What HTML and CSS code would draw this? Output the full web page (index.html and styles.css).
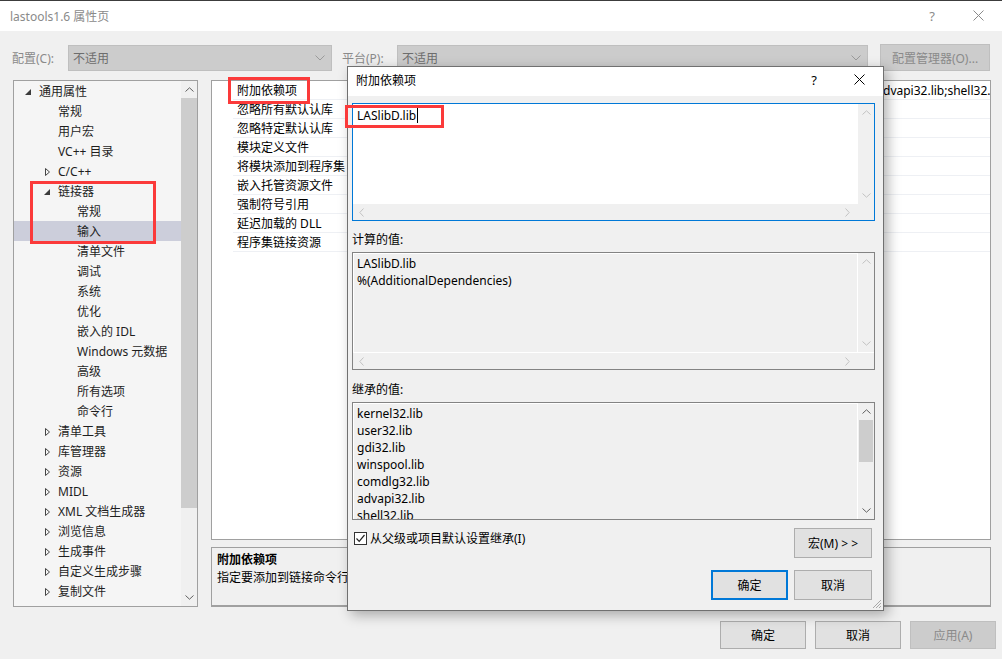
FILE: index.html
```html
<!DOCTYPE html>
<html lang="zh-CN">
<head>
    <meta charset="UTF-8">
    <title>lastools1.6 属性页</title>
    <link rel="stylesheet" href="styles.css">
</head>
<body>
    <div class="titlebar">
        <span class="title">lastools1.6 属性页</span>
        <span class="tb-help">?</span>
        <svg class="tb-close" width="11" height="11" viewBox="0 0 11 11"><path d="M0.5 0.5L10.5 10.5M10.5 0.5L0.5 10.5" stroke="#8a8a8a" stroke-width="1"/></svg>
    </div>

    <div class="config">
        <label class="cfg-label">配置(C):</label>
        <div class="combo combo-config">不适用<svg width="10" height="6" viewBox="0 0 10 6"><path d="M0.5 0.5L5 5L9.5 0.5" fill="none" stroke="#9a9a9a"/></svg></div>
        <label class="cfg-label cfg-platform">平台(P):</label>
        <div class="combo combo-platform">不适用<svg width="10" height="6" viewBox="0 0 10 6"><path d="M0.5 0.5L5 5L9.5 0.5" fill="none" stroke="#9a9a9a"/></svg></div>
        <button class="btn btn-cfg" disabled>配置管理器(O)...</button>
    </div>

    <div class="main">
        <div class="tree">
            <div class="tree-list">
                <div class="node l0"><span class="tw"><svg width="6" height="6" viewBox="0 0 6 6"><path d="M6 0V6H0Z" fill="#3c3c3c"/></svg></span>通用属性</div>
                <div class="node l1"><span class="tw"></span>常规</div>
                <div class="node l1"><span class="tw"></span>用户宏</div>
                <div class="node l1"><span class="tw"></span>VC++ 目录</div>
                <div class="node l1"><span class="tw"><svg class="closed" width="5" height="8" viewBox="0 0 5 8"><path d="M0.5 0.5L4.5 4L0.5 7.5Z" fill="none" stroke="#444"/></svg></span>C/C++</div>
                <div class="node l1"><span class="tw"><svg width="6" height="6" viewBox="0 0 6 6"><path d="M6 0V6H0Z" fill="#3c3c3c"/></svg></span>链接器</div>
                <div class="node l2">常规</div>
                <div class="node l2 selected">输入</div>
                <div class="node l2">清单文件</div>
                <div class="node l2">调试</div>
                <div class="node l2">系统</div>
                <div class="node l2">优化</div>
                <div class="node l2">嵌入的 IDL</div>
                <div class="node l2">Windows 元数据</div>
                <div class="node l2">高级</div>
                <div class="node l2">所有选项</div>
                <div class="node l2">命令行</div>
                <div class="node l1"><span class="tw"><svg class="closed" width="5" height="8" viewBox="0 0 5 8"><path d="M0.5 0.5L4.5 4L0.5 7.5Z" fill="none" stroke="#444"/></svg></span>清单工具</div>
                <div class="node l1"><span class="tw"><svg class="closed" width="5" height="8" viewBox="0 0 5 8"><path d="M0.5 0.5L4.5 4L0.5 7.5Z" fill="none" stroke="#444"/></svg></span>库管理器</div>
                <div class="node l1"><span class="tw"><svg class="closed" width="5" height="8" viewBox="0 0 5 8"><path d="M0.5 0.5L4.5 4L0.5 7.5Z" fill="none" stroke="#444"/></svg></span>资源</div>
                <div class="node l1"><span class="tw"><svg class="closed" width="5" height="8" viewBox="0 0 5 8"><path d="M0.5 0.5L4.5 4L0.5 7.5Z" fill="none" stroke="#444"/></svg></span>MIDL</div>
                <div class="node l1"><span class="tw"><svg class="closed" width="5" height="8" viewBox="0 0 5 8"><path d="M0.5 0.5L4.5 4L0.5 7.5Z" fill="none" stroke="#444"/></svg></span>XML 文档生成器</div>
                <div class="node l1"><span class="tw"><svg class="closed" width="5" height="8" viewBox="0 0 5 8"><path d="M0.5 0.5L4.5 4L0.5 7.5Z" fill="none" stroke="#444"/></svg></span>浏览信息</div>
                <div class="node l1"><span class="tw"><svg class="closed" width="5" height="8" viewBox="0 0 5 8"><path d="M0.5 0.5L4.5 4L0.5 7.5Z" fill="none" stroke="#444"/></svg></span>生成事件</div>
                <div class="node l1"><span class="tw"><svg class="closed" width="5" height="8" viewBox="0 0 5 8"><path d="M0.5 0.5L4.5 4L0.5 7.5Z" fill="none" stroke="#444"/></svg></span>自定义生成步骤</div>
                <div class="node l1"><span class="tw"><svg class="closed" width="5" height="8" viewBox="0 0 5 8"><path d="M0.5 0.5L4.5 4L0.5 7.5Z" fill="none" stroke="#444"/></svg></span>复制文件</div>
            </div>
            <div class="vbar tree-bar">
                <span class="arrow"><svg width="9" height="5" viewBox="0 0 9 5"><path d="M0.5 4.5L4.5 0.8L8.5 4.5" fill="none" stroke="#606060"/></svg></span>
                <span class="thumb tree-thumb"></span>
                <span class="track"></span>
                <span class="arrow"><svg width="9" height="5" viewBox="0 0 9 5"><path d="M0.5 0.5L4.5 4.2L8.5 0.5" fill="none" stroke="#606060"/></svg></span>
            </div>
        </div>

        <div class="right">
            <div class="grid">
                <div class="grid-row"><span class="gutter"></span><span class="name">附加依赖项</span><span class="value">LASlibD.lib;kernel32.lib;user32.lib;gdi32.lib;winspool.lib;comdlg32.lib;advapi32.lib;shell32.lib;ole32.lib;oleaut32.lib;uuid.lib;odbc32.lib;odbccp32.lib;%(AdditionalDependencies)</span></div>
                <div class="grid-row"><span class="gutter"></span><span class="name">忽略所有默认认库</span><span class="value"></span></div>
                <div class="grid-row"><span class="gutter"></span><span class="name">忽略特定默认认库</span><span class="value"></span></div>
                <div class="grid-row"><span class="gutter"></span><span class="name">模块定义文件</span><span class="value"></span></div>
                <div class="grid-row"><span class="gutter"></span><span class="name">将模块添加到程序集</span><span class="value"></span></div>
                <div class="grid-row"><span class="gutter"></span><span class="name">嵌入托管资源文件</span><span class="value"></span></div>
                <div class="grid-row"><span class="gutter"></span><span class="name">强制符号引用</span><span class="value"></span></div>
                <div class="grid-row"><span class="gutter"></span><span class="name">延迟加载的 DLL</span><span class="value"></span></div>
                <div class="grid-row"><span class="gutter"></span><span class="name">程序集链接资源</span><span class="value"></span></div>
            </div>
            <div class="desc">
                <div class="desc-title">附加依赖项</div>
                <div class="desc-text">指定要添加到链接命令行的附加项。[例如 kernel32.lib]</div>
            </div>
        </div>
    </div>

    <div class="footer">
        <button class="btn">确定</button>
        <button class="btn">取消</button>
        <button class="btn" disabled>应用(A)</button>
    </div>

    <div class="dialog">
        <div class="dlg-title">
            <span class="dlg-name">附加依赖项</span>
            <span class="dlg-help">?</span>
            <svg class="dlg-close" width="11" height="11" viewBox="0 0 11 11"><path d="M0.5 0.5L10.5 10.5M10.5 0.5L0.5 10.5" stroke="#000" stroke-width="1"/></svg>
        </div>
        <div class="dlg-body">
            <div class="box edit">
                <div class="box-main">
                    <div class="box-text">LASlibD.lib<span class="caret"></span></div>
                    <div class="vbar">
                        <span class="arrow"><svg width="9" height="5" viewBox="0 0 9 5"><path d="M0.5 4.5L4.5 0.8L8.5 4.5" fill="none" stroke="#c2c2c2"/></svg></span>
                        <span class="track"></span>
                        <span class="arrow"><svg width="9" height="5" viewBox="0 0 9 5"><path d="M0.5 0.5L4.5 4.2L8.5 0.5" fill="none" stroke="#c2c2c2"/></svg></span>
                    </div>
                </div>
                <div class="hbar">
                    <span class="harrow"><svg width="5" height="9" viewBox="0 0 5 9"><path d="M4.5 0.5L0.8 4.5L4.5 8.5" fill="none" stroke="#c2c2c2"/></svg></span>
                    <span class="harrow"><svg width="5" height="9" viewBox="0 0 5 9"><path d="M0.5 0.5L4.2 4.5L0.5 8.5" fill="none" stroke="#c2c2c2"/></svg></span>
                </div>
            </div>

            <div class="dlg-label">计算的值:</div>
            <div class="box readonly">
                <div class="box-main">
                    <div class="box-text">
                        <div>LASlibD.lib</div>
                        <div>%(AdditionalDependencies)</div>
                    </div>
                    <div class="vbar">
                        <span class="arrow"><svg width="9" height="5" viewBox="0 0 9 5"><path d="M0.5 4.5L4.5 0.8L8.5 4.5" fill="none" stroke="#c2c2c2"/></svg></span>
                        <span class="track"></span>
                        <span class="arrow"><svg width="9" height="5" viewBox="0 0 9 5"><path d="M0.5 0.5L4.5 4.2L8.5 0.5" fill="none" stroke="#c2c2c2"/></svg></span>
                    </div>
                </div>
                <div class="hbar">
                    <span class="harrow"><svg width="5" height="9" viewBox="0 0 5 9"><path d="M4.5 0.5L0.8 4.5L4.5 8.5" fill="none" stroke="#c2c2c2"/></svg></span>
                    <span class="harrow"><svg width="5" height="9" viewBox="0 0 5 9"><path d="M0.5 0.5L4.2 4.5L0.5 8.5" fill="none" stroke="#c2c2c2"/></svg></span>
                </div>
            </div>

            <div class="dlg-label second">继承的值:</div>
            <div class="box readonly">
                <div class="box-main full">
                    <div class="box-text">
                        <div>kernel32.lib</div>
                        <div>user32.lib</div>
                        <div>gdi32.lib</div>
                        <div>winspool.lib</div>
                        <div>comdlg32.lib</div>
                        <div>advapi32.lib</div>
                        <div>shell32.lib</div>
                    </div>
                    <div class="vbar">
                        <span class="arrow"><svg width="9" height="5" viewBox="0 0 9 5"><path d="M0.5 4.5L4.5 0.8L8.5 4.5" fill="none" stroke="#606060"/></svg></span>
                        <span class="thumb list-thumb"></span>
                        <span class="track"></span>
                        <span class="arrow"><svg width="9" height="5" viewBox="0 0 9 5"><path d="M0.5 0.5L4.5 4.2L8.5 0.5" fill="none" stroke="#606060"/></svg></span>
                    </div>
                </div>
            </div>

            <div class="dlg-row">
                <label class="check"><span class="checkbox"><svg width="11" height="11" viewBox="0 0 11 11"><path d="M1.5 5.5L4.2 8.3L9.5 2" fill="none" stroke="#222" stroke-width="1.2"/></svg></span><span class="check-text">从父级或项目默认设置继承(I)</span></label>
                <button class="btn dlg-btn">宏(M) &gt; &gt;</button>
            </div>
            <div class="dlg-actions">
                <button class="btn dlg-btn default">确定</button>
                <button class="btn dlg-btn">取消</button>
            </div>
        </div>
        <svg class="grip" width="10" height="10" viewBox="0 0 10 10"><path d="M9 1L1 9M9 4L4 9M9 7L7 9" stroke="#a8a8a8" stroke-width="1"/></svg>
    </div>

    <div class="mark mark-tree"></div>
    <div class="mark mark-prop"></div>
    <div class="mark mark-edit"></div>
</body>
</html>
```

FILE: styles.css
```css
body {
    margin: 0;
    width: 1002px;
    height: 659px;
    overflow: hidden;
    position: relative;
    background-color: #f0f0f0;
    font-family: "Noto Sans", "Noto Sans CJK SC", sans-serif;
    font-size: 12px;
    color: #000;
}
button {
    font-family: inherit;
    font-size: 12px;
}

/* outer window */
.titlebar {
    height: 31px;
    box-sizing: border-box;
    background-color: #fff;
    border-top: 1px solid #3c3c3c;
    display: flex;
    align-items: center;
    padding-left: 10px;
    padding-bottom: 1px;
    color: #8a8a8a;
}
.title {
    flex: 1;
}
.tb-help {
    margin-right: 38px;
    font-size: 13px;
}
.tb-close {
    margin-right: 18px;
}
.config {
    display: flex;
    align-items: center;
    height: 27px;
    margin-top: 13px;
    padding-left: 12px;
}
.cfg-label {
    width: 56px;
    color: #8a8a8a;
}
.cfg-platform {
    margin-left: 10px;
    width: 55px;
}
.combo {
    height: 26px;
    box-sizing: border-box;
    border: 1px solid #bfbfbf;
    background-color: #cccccc;
    color: #6d6d6d;
    display: flex;
    align-items: center;
    justify-content: space-between;
    padding: 0 6px 0 4px;
}
.combo-config {
    width: 264px;
}
.combo-platform {
    width: 471px;
}
.btn {
    height: 28px;
    box-sizing: border-box;
    border: 1px solid #adadad;
    background-color: #e1e1e1;
    color: #000;
    padding: 0;
}
.btn:disabled {
    background-color: #cccccc;
    border-color: #bfbfbf;
    color: #8a8a8a;
}
.btn-cfg {
    margin-left: 12px;
    width: 110px;
    height: 27px;
}

.main {
    display: flex;
    gap: 13px;
    height: 527px;
    margin-top: 9px;
    padding-left: 13px;
}
.tree {
    width: 185px;
    box-sizing: border-box;
    border: 1px solid #a0a0a0;
    background-color: #f5f5f5;
    display: flex;
}
.tree-list {
    width: 167px;
    flex: none;
    overflow: hidden;
}
.node {
    height: 20px;
    box-sizing: border-box;
    padding-top: 1px;
    line-height: 19px;
    display: flex;
    align-items: center;
    white-space: nowrap;
    color: #1e1e1e;
}
.l0 {
    padding-left: 11px;
}
.l1 {
    padding-left: 30px;
}
.l2 {
    padding-left: 63px;
}
.tw {
    width: 14px;
    flex: none;
    display: flex;
    align-items: center;
}
.tw .closed {
    margin-left: 1px;
}
.selected {
    background-color: #cccedb;
}

/* scrollbars */
.vbar {
    width: 16px;
    flex: none;
    display: flex;
    flex-direction: column;
    background-color: #f0f0f0;
}
.arrow {
    height: 17px;
    flex: none;
    display: flex;
    align-items: center;
    justify-content: center;
}
.track {
    flex: 1;
}
.thumb {
    flex: none;
    margin: 0 1px;
    background-color: #cdcdcd;
}
.tree-thumb {
    height: 410px;
    margin: 0;
}
.list-thumb {
    height: 42px;
}
.hbar {
    height: 16px;
    display: flex;
    align-items: center;
    justify-content: space-between;
    padding: 0 24px 0 6px;
    background-color: #f0f0f0;
}

/* property grid */
.right {
    width: 780px;
    display: flex;
    flex-direction: column;
    gap: 7px;
}
.grid {
    height: 461px;
    box-sizing: border-box;
    border: 1px solid #a0a0a0;
    background-color: #fff;
    overflow: hidden;
}
.grid-row {
    display: flex;
    height: 19px;
}
.gutter {
    width: 21px;
    flex: none;
}
.name, .value {
    box-sizing: border-box;
    height: 19px;
    padding-top: 1px;
    line-height: 17px;
    border-bottom: 1px solid #eef0f4;
    padding-left: 4px;
    white-space: nowrap;
    overflow: hidden;
}
.name {
    width: 251px;
    flex: none;
}
.value {
    flex: 1;
    min-width: 0;
}
.desc {
    height: 60px;
    box-sizing: border-box;
    border: 1px solid #a0a0a0;
    border-bottom-width: 2px;
    padding: 3px 5px 0;
    line-height: 18px;
    overflow: hidden;
    white-space: nowrap;
}
.desc-title {
    font-weight: bold;
}

.footer {
    display: flex;
    justify-content: flex-end;
    gap: 9px;
    margin-top: 14px;
    padding-right: 6px;
}
.footer .btn {
    width: 86px;
}

/* dialog */
.dialog {
    position: absolute;
    left: 347px;
    top: 66px;
    width: 537px;
    height: 545px;
    box-sizing: border-box;
    border: 1px solid #707070;
    background-color: #f0f0f0;
    box-shadow: 4px 4px 12px rgba(0, 0, 0, 0.3);
}
.dlg-title {
    height: 29px;
    box-sizing: border-box;
    padding: 0 0 4px 8px;
    background-color: #fff;
    display: flex;
    align-items: center;
}
.dlg-name {
    flex: 1;
}
.dlg-help {
    font-size: 13px;
    margin-right: 37px;
}
.dlg-close {
    margin-right: 18px;
}
.dlg-body {
    padding: 7px 8px 10px 4px;
}
.box {
    height: 118px;
    box-sizing: border-box;
    border: 1px solid #838383;
    display: flex;
    flex-direction: column;
}
.box-main {
    flex: 1;
    display: flex;
    min-height: 0;
}
.box-text {
    flex: 1;
    padding: 2px 0 0 4px;
    line-height: 17px;
    overflow: hidden;
    white-space: nowrap;
}
.edit {
    border-color: #0078d7;
    background-color: #fff;
}
.edit .box-text {
    padding-top: 3px;
}
.caret {
    display: inline-block;
    width: 1px;
    height: 15px;
    background-color: #000;
    vertical-align: -3px;
    margin-left: 1px;
}
.readonly {
    background-color: #f0f0f0;
    box-shadow: inset 1px 1px 0 #fff;
}
.readonly .vbar {
    border-left: 1px solid #fff;
}
.readonly .hbar {
    border-top: 1px solid #fff;
}
.dlg-label {
    line-height: 17px;
    margin: 10px 0 4px;
}
.dlg-label.second {
    margin-top: 11px;
}
.dlg-row {
    display: flex;
    align-items: flex-start;
    justify-content: space-between;
    margin-top: 8px;
    padding-right: 3px;
}
.check {
    display: flex;
    align-items: center;
    gap: 3px;
    margin: 2px 0 0 2px;
    line-height: 17px;
}
.checkbox {
    width: 13px;
    height: 13px;
    flex: none;
    box-sizing: border-box;
    border: 1px solid #333;
    background-color: #fff;
    display: flex;
    align-items: center;
    justify-content: center;
}
.check-text {
    white-space: nowrap;
}
.dlg-btn {
    width: 78px;
    height: 30px;
}
.dlg-actions {
    display: flex;
    justify-content: flex-end;
    gap: 6px;
    margin-top: 12px;
    padding-right: 3px;
}
.dlg-btn.default {
    width: 77px;
    border: 2px solid #0078d7;
}
.grip {
    position: absolute;
    right: 1px;
    bottom: 1px;
}

/* red annotation boxes drawn over the screenshot */
.mark {
    position: absolute;
    border: 3px solid #fb3a3a;
    box-sizing: border-box;
}
.mark-tree {
    left: 30px;
    top: 181px;
    width: 126px;
    height: 63px;
}
.mark-prop {
    left: 228px;
    top: 77px;
    width: 82px;
    height: 27px;
}
.mark-edit {
    left: 345px;
    top: 105px;
    width: 99px;
    height: 23px;
}
```
